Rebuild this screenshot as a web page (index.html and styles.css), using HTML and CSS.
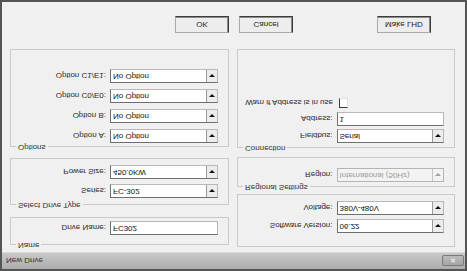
FILE: index.html
```html
<!DOCTYPE html>
<html lang="en">
<head>
  <meta charset="UTF-8" />
  <title>New Drive</title>
  <link rel="stylesheet" href="styles.css">
</head>
<body>

  <div class="window">
    <div class="titlebar">
      <span class="title">New Drive</span>
      <span class="close">&#x2715;</span>
    </div>

    <div class="content">
      <div class="columns">

        <div class="col left">
          <div class="group name-group">
            <span class="legend">Name</span>
            <div class="row">
              <label>Drive Name:</label>
              <div class="field">FC302</div>
            </div>
          </div>

          <div class="group type-group">
            <span class="legend">Select Drive Type</span>
            <div class="row">
              <label>Series:</label>
              <div class="field combo">FC-302<span class="drop"></span></div>
            </div>
            <div class="row">
              <label>Power Size:</label>
              <div class="field combo">450.0KW<span class="drop"></span></div>
            </div>
          </div>

          <div class="group options-group">
            <span class="legend">Options</span>
            <div class="row">
              <label>Option A:</label>
              <div class="field combo">No Option<span class="drop"></span></div>
            </div>
            <div class="row">
              <label>Option B:</label>
              <div class="field combo">No Option<span class="drop"></span></div>
            </div>
            <div class="row">
              <label>Option C0/E0:</label>
              <div class="field combo">No Option<span class="drop"></span></div>
            </div>
            <div class="row">
              <label>Option C1/E1:</label>
              <div class="field combo">No Option<span class="drop"></span></div>
            </div>
          </div>
        </div>

        <div class="col right">
          <div class="group voltage-group">
            <div class="row">
              <label>Software Version:</label>
              <div class="field combo">06.22<span class="drop"></span></div>
            </div>
            <div class="row">
              <label>Voltage:</label>
              <div class="field combo">380V-480V<span class="drop"></span></div>
            </div>
          </div>

          <div class="group region-group">
            <span class="legend">Regional Settings</span>
            <div class="row">
              <label>Region:</label>
              <div class="field combo disabled">International (50Hz)<span class="drop"></span></div>
            </div>
          </div>

          <div class="group conn-group">
            <span class="legend">Connection</span>
            <div class="row">
              <label>Fieldbus:</label>
              <div class="field combo">Serial<span class="drop"></span></div>
            </div>
            <div class="row">
              <label>Address:</label>
              <div class="field">1</div>
            </div>
            <div class="row check-row">
              <label>Warn if Address is in use</label>
              <span class="checkbox"></span>
            </div>
          </div>
        </div>

      </div>

      <div class="buttons">
        <button type="button" class="btn">OK</button>
        <button type="button" class="btn">Cancel</button>
        <button type="button" class="btn lhd">Make LHD</button>
      </div>
    </div>
  </div>

</body>
</html>
```

FILE: styles.css
```css
body {
  margin: 0;
  background: #f0f0f0;
  font-family: "Liberation Sans", Arial, sans-serif;
  font-size: 8px;
  color: #2a2a2a;
}

/* the whole dialog is shown upside down */
.window {
  width: 467px;
  height: 271px;
  box-sizing: border-box;
  border: 2px solid #555;
  background: #f0f0f0;
  transform: scaleY(-1);
  display: flex;
  flex-direction: column;
}

.titlebar {
  height: 16px;
  display: flex;
  align-items: center;
  justify-content: space-between;
  padding: 0 1px 0 4px;
  background: linear-gradient(#acacac, #c8c8c8);
  border-bottom: 1px solid #dadada;
}

.title {
  color: #333;
}

.close {
  width: 20px;
  height: 9px;
  line-height: 9px;
  text-align: center;
  font-size: 7px;
  color: #fff;
  background: linear-gradient(#a4a4a4, #bcbcbc);
  border: 1px solid #7a7a7a;
  border-radius: 2px;
}

.content {
  flex: 1;
  padding: 0 10px 0 8px;
}

.columns {
  display: flex;
  gap: 8px;
}

.col {
  display: flex;
  flex-direction: column;
}

.col.left {
  width: 220px;
  padding-top: 7px;
}

.col.right {
  width: 218px;
  padding-top: 5px;
}

.group {
  position: relative;
  box-sizing: border-box;
  border: 1px solid #cacaca;
  display: flex;
  flex-direction: column;
  padding-right: 10px;
}

.legend {
  position: absolute;
  top: -6px;
  left: 5px;
  padding: 0 2px;
  background: #f0f0f0;
  color: #333;
}

.row {
  display: flex;
  align-items: center;
  height: 14px;
  gap: 4px;
}

.row label {
  width: 95px;
  text-align: right;
  white-space: nowrap;
}

.field {
  position: relative;
  box-sizing: border-box;
  width: 108px;
  height: 14px;
  line-height: 12px;
  padding-left: 2px;
  background: #fff;
  border: 1px solid #8a8a8a;
  border-color: #6f6f6f #b8b8b8 #b8b8b8 #6f6f6f;
  color: #111;
}

.drop {
  position: absolute;
  top: 0;
  right: 0;
  width: 11px;
  height: 12px;
  box-sizing: border-box;
  background: #ececec;
  border-left: 1px solid #9a9a9a;
}

.drop::after {
  content: "";
  position: absolute;
  left: 2px;
  top: 5px;
  border-left: 3px solid transparent;
  border-right: 3px solid transparent;
  border-top: 3px solid #111;
}

.field.disabled {
  background: #f3f3f3;
  color: #9a9a9a;
  border-color: #b4b4b4;
}

.field.disabled .drop {
  background: #f3f3f3;
  border-left-color: #c4c4c4;
}

.field.disabled .drop::after {
  border-top-color: #a0a0a0;
}

.name-group {
  height: 28px;
  padding-top: 9px;
}

.type-group {
  margin-top: 12px;
  height: 47px;
  padding-top: 6px;
  gap: 5px;
}

.options-group {
  margin-top: 11px;
  height: 98px;
  padding-top: 3px;
  gap: 6px;
}

.voltage-group {
  height: 53px;
  padding-top: 13px;
  gap: 4px;
}

.region-group {
  margin-top: 7px;
  height: 30px;
  padding-top: 4px;
}

.conn-group {
  margin-top: 9px;
  height: 99px;
  padding-top: 4px;
  gap: 3px;
}

.check-row {
  height: 12px;
}

.row label.check-label,
.check-row label {
  width: 95px;
}

.checkbox {
  width: 9px;
  height: 10px;
  margin-left: 2px;
  box-sizing: border-box;
  background: #fff;
  border: 1px solid;
  border-color: #3c3c3c #e0e0e0 #e0e0e0 #3c3c3c;
}

.buttons {
  display: flex;
  margin-top: 16px;
  padding-left: 165px;
  gap: 10px;
}

.btn {
  width: 54px;
  height: 17px;
  padding: 0;
  font-family: "Liberation Sans", Arial, sans-serif;
  font-size: 8px;
  color: #222;
  background: #ededed;
  border: 1px solid;
  border-color: #a8a8a8 #3c3c3c #3c3c3c #a8a8a8;
  box-shadow: inset -1px -1px #8a8a8a;
}

.btn.lhd {
  margin-left: 74px;
}
```
